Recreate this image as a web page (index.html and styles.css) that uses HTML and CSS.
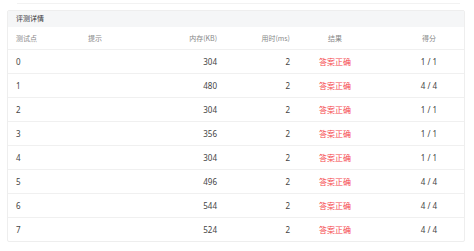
FILE: index.html
```html
<!DOCTYPE html>
<html lang="zh">
<head>
<meta charset="utf-8">
<link rel="stylesheet" href="styles.css">
</head>
<body>
<div class="prev"></div>
<section class="card">
  <div class="title">评测详情</div>
  <div class="grid head">
    <div class="c1">测试点</div><div class="c2">提示</div><div class="c3">内存(KB)</div><div class="c4">用时(ms)</div><div class="c5">结果</div><div class="c6">得分</div>
  </div>
  <div class="grid row"><div class="c1">0</div><div class="c2"></div><div class="c3">304</div><div class="c4">2</div><div class="c5 ok">答案正确</div><div class="c6">1 / 1</div></div>
  <div class="grid row"><div class="c1">1</div><div class="c2"></div><div class="c3">480</div><div class="c4">2</div><div class="c5 ok">答案正确</div><div class="c6">4 / 4</div></div>
  <div class="grid row"><div class="c1">2</div><div class="c2"></div><div class="c3">304</div><div class="c4">2</div><div class="c5 ok">答案正确</div><div class="c6">1 / 1</div></div>
  <div class="grid row"><div class="c1">3</div><div class="c2"></div><div class="c3">356</div><div class="c4">2</div><div class="c5 ok">答案正确</div><div class="c6">1 / 1</div></div>
  <div class="grid row"><div class="c1">4</div><div class="c2"></div><div class="c3">304</div><div class="c4">2</div><div class="c5 ok">答案正确</div><div class="c6">1 / 1</div></div>
  <div class="grid row"><div class="c1">5</div><div class="c2"></div><div class="c3">496</div><div class="c4">2</div><div class="c5 ok">答案正确</div><div class="c6">4 / 4</div></div>
  <div class="grid row"><div class="c1">6</div><div class="c2"></div><div class="c3">544</div><div class="c4">2</div><div class="c5 ok">答案正确</div><div class="c6">4 / 4</div></div>
  <div class="grid row last"><div class="c1">7</div><div class="c2"></div><div class="c3">524</div><div class="c4">2</div><div class="c5 ok">答案正确</div><div class="c6">4 / 4</div></div>
</section>
</body>
</html>
```
FILE: styles.css
```css
html, body {
  margin: 0;
  padding: 0;
  background: #fff;
}
body {
  width: 474px;
  height: 251px;
  overflow: hidden;
  font-family: "Noto Sans", "Noto Sans CJK SC", sans-serif;
  color: #444;
}
.prev {
  height: 3px;
  margin: 0 14px 0 17px;
  border-bottom: 1px solid #f2f2f2;
}
.card {
  margin: 6px 0 0 7px;
  width: 456px;
  border: 1px solid #eeeeee;
  border-radius: 2px;
}
.title {
  height: 16px;
  line-height: 16px;
  padding-left: 8px;
  background: #f5f6f7;
  font-size: 7px;
  color: #333;
}
.grid {
  display: grid;
  grid-template-columns: 80px 72px 65px 73px 74px 1fr;
  align-items: center;
  border-bottom: 1px solid #f0f0f0;
}
.head {
  height: 22px;
  font-size: 7px;
  color: #888;
}
.row {
  height: 23px;
  font-size: 8px;
  color: #444;
}
.row.last {
  border-bottom: none;
}
.c1 { padding-left: 8px; }
.c3, .c4 { text-align: right; padding-right: 8px; }
.c5 { text-align: center; }
.c6 { text-align: center; padding-left: 22px; }
.ok {
  color: #f5474c;
  font-family: "Noto Sans CJK SC", sans-serif;
}
.head .c1, .head .c2, .head .c3, .head .c4, .head .c5, .head .c6 {
  font-family: "Noto Sans CJK SC", sans-serif;
}
```
